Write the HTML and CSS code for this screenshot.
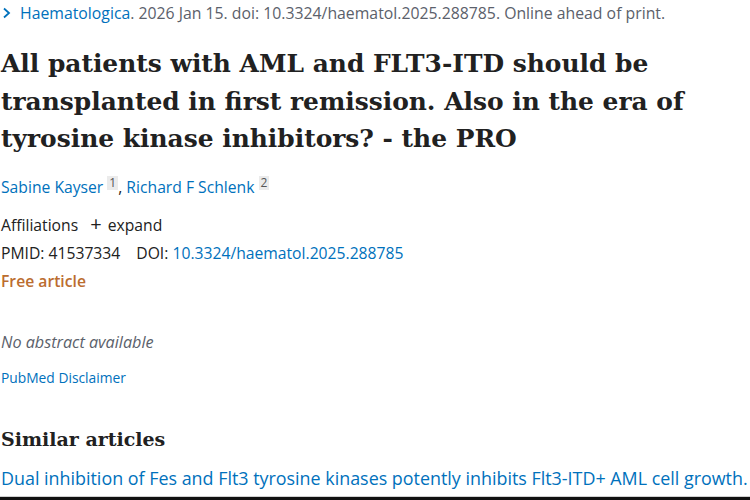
FILE: index.html
```html
<!DOCTYPE html>
<html lang="en">
<head>
<meta charset="utf-8">
<title>PubMed article</title>
<link rel="stylesheet" href="styles.css">
</head>
<body>
<main class="page">
  <div class="citation">
    <svg class="chev" width="10" height="14" viewBox="0 0 10 14"><path d="M2 2.5 L7 7 L2 11.5" fill="none" stroke="#0071bc" stroke-width="1.8"/></svg>
    <a class="link" href="#">Haematologica</a><span class="cit-text">. 2026 Jan 15. doi: 10.3324/haematol.2025.288785. Online ahead of print.</span>
  </div>
  <h1 class="title">All patients with AML and FLT3-ITD should be transplanted in first remission. Also in the era of tyrosine kinase inhibitors? - the PRO</h1>
  <div class="authors">
    <a class="link" href="#">Sabine Kayser</a> <span class="sup">1</span>, <a class="link" href="#">Richard F Schlenk</a> <span class="sup">2</span>
  </div>
  <div class="affil">Affiliations <span class="plus">+</span> expand</div>
  <div class="ids"><span>PMID: 41537334</span><span>DOI: <a class="link" href="#">10.3324/haematol.2025.288785</a></span></div>
  <div class="free">Free article</div>
  <div class="noabs">No abstract available</div>
  <div class="disclaimer"><a class="link" href="#">PubMed Disclaimer</a></div>
  <h2 class="similar">Similar articles</h2>
  <div class="sim-item"><a class="link" href="#">Dual inhibition of Fes and Flt3 tyrosine kinases potently inhibits Flt3-ITD+ AML cell growth.</a></div>
</main>
<div class="bottom-bar"></div>
</body>
</html>
```
FILE: styles.css
```css
html, body {
  margin: 0;
  padding: 0;
  background: #fff;
  overflow: hidden;
}
body {
  width: 750px;
  height: 500px;
  position: relative;
  font-family: "Open Sans", "Noto Sans", sans-serif;
  color: #212121;
}
.page {
  padding-left: 1px;
}
.link {
  color: #0071bc;
  text-decoration: none;
}
.citation {
  display: flex;
  align-items: center;
  height: 25px;
  font-size: 15.8px;
  color: #5b616b;
  white-space: nowrap;
}
.chev {
  margin: 0 8px 0 1px;
}
.title {
  margin: 20px 0 0 0;
  font-family: "DejaVu Serif", serif;
  font-weight: bold;
  font-size: 24.9px;
  line-height: 37.5px;
  color: #212121;
  width: 740px;
}
.authors {
  margin-top: 18px;
  font-size: 15.7px;
  line-height: 20px;
}
.sup {
  display: inline-block;
  background: #ebebeb;
  color: #555;
  font-size: 12px;
  line-height: 14px;
  padding: 0 2px;
  vertical-align: 6px;
}
.affil {
  margin-top: 17px;
  font-size: 15.7px;
  line-height: 20px;
}
.plus {
  font-size: 20px;
  margin: 0 2px 0 8px;
}
.ids {
  margin-top: 8px;
  display: flex;
  gap: 16px;
  font-size: 15.7px;
  line-height: 20px;
}
.free {
  margin-top: 8px;
  font-size: 15.7px;
  line-height: 20px;
  font-weight: 600;
  color: #bb6d2f;
}
.noabs {
  margin-top: 41px;
  font-size: 16.2px;
  line-height: 20px;
  font-style: italic;
  color: #5b616b;
}
.disclaimer {
  margin-top: 16px;
  font-size: 13.8px;
  line-height: 20px;
}
.similar {
  margin: 37px 0 0 0;
  font-family: "DejaVu Serif", serif;
  font-weight: bold;
  font-size: 19px;
  line-height: 28px;
  color: #212121;
}
.sim-item {
  margin-top: 13px;
  font-size: 17.9px;
  line-height: 24px;
  white-space: nowrap;
}
.bottom-bar {
  position: absolute;
  left: 0;
  right: 0;
  bottom: 0;
  height: 4px;
  border-top: 1px solid #d0d0d0;
  background: #111;
  box-sizing: border-box;
}
```
